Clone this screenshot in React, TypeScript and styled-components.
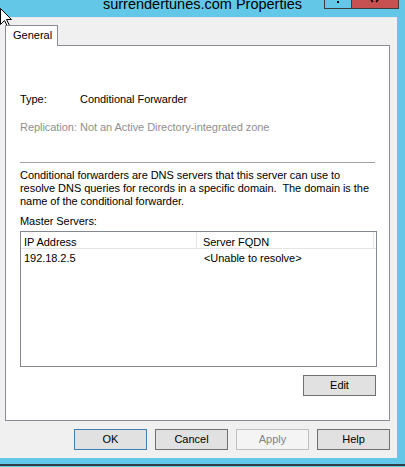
import React from "react";
import styled, { createGlobalStyle } from "styled-components";

const GlobalStyle = createGlobalStyle`
  html, body { margin: 0; padding: 0; background: #63c7e7; }
  body { font-family: "Liberation Sans", Arial, sans-serif; -webkit-font-smoothing: none; }
  * { box-sizing: border-box; }
`;

const Window = styled.div`
  position: relative;
  width: 405px;
  height: 467px;
  background: #63c7e7;
  display: flex;
  flex-direction: column;
  overflow: hidden;
`;

const TitleBar = styled.div`
  height: 17px;
  display: grid;
  overflow: hidden;
`;

const Title = styled.div`
  grid-area: 1 / 1;
  justify-self: center;
  width: 397px;
  text-align: center;
  font-size: 14.5px;
  line-height: 17px;
  margin-top: -4.5px;
  color: #000;
  white-space: nowrap;
`;

const Captions = styled.div`
  grid-area: 1 / 1;
  justify-self: end;
  align-self: start;
  display: flex;
  margin-right: 6px;
`;

const CaptionButton = styled.div<{ $close?: boolean }>`
  width: ${(p) => (p.$close ? 47 : 28)}px;
  height: 9px;
  background: ${(p) => (p.$close ? "#c75050" : "#63c7e7")};
  border: 1px solid #3d3d3d;
  border-top: none;
  ${(p) => (p.$close ? "border-left: none;" : "")}
  display: flex;
  justify-content: center;
  align-items: flex-start;
`;

const Client = styled.div`
  width: 397px;
  height: 441px;
  background: #f0f0f0;
  border-top: 1px solid #e8e8e8;
  padding: 7px 7px 0 5px;
  display: flex;
  flex-direction: column;
`;

const BottomEdge = styled.div`
  margin-top: 6px;
  height: 2px;
  background: #2f3d44;
`;

const Tab = styled.div`
  position: relative;
  z-index: 1;
  width: 53px;
  height: 21px;
  margin-bottom: -1px;
  background: #fff;
  border: 1px solid #898c95;
  border-bottom: none;
  padding: 3px 0 0 7px;
  font-size: 11px;
  line-height: 13px;
  color: #000;
`;

const Panel = styled.div`
  height: 376px;
  background: #fff;
  border: 1px solid #898c95;
  padding: 47px 13px 0 14px;
  display: flex;
  flex-direction: column;
  font-size: 11px;
  line-height: 13px;
  letter-spacing: -0.05px;
  color: #000;
`;

const InfoRow = styled.div<{ $muted?: boolean; $gap?: number }>`
  display: grid;
  grid-template-columns: 60px 1fr;
  margin-top: ${(p) => p.$gap ?? 0}px;
  color: ${(p) => (p.$muted ? "#8f8f8f" : "#000")};
`;

const Separator = styled.div`
  margin-top: 28px;
  margin-right: 1px;
  height: 1px;
  background: #a0a0a0;
`;

const Paragraph = styled.p`
  margin: 6px 0 0;
  width: 350px;
`;

const Label = styled.div`
  margin-top: 7px;
`;

const ListBox = styled.div`
  margin-top: 3px;
  margin-right: -1px;
  height: 136px;
  border: 1px solid #828790;
  background: #fff;
  display: flex;
  flex-direction: column;
`;

const Columns = styled.div<{ $header?: boolean }>`
  display: grid;
  grid-template-columns: 176px 177px;
  height: ${(p) => (p.$header ? 17 : 16)}px;
  ${(p) => (p.$header ? "border-bottom: 1px solid #e5e5e5;" : "margin-top: 3px;")}
`;

const Cell = styled.div<{ $header?: boolean; $pad: number }>`
  padding-left: ${(p) => p.$pad}px;
  padding-top: ${(p) => (p.$header ? 4 : 0)}px;
  white-space: nowrap;
  ${(p) => (p.$header ? "border-right: 1px solid #e5e5e5;" : "")}
`;

const Button = styled.div<{ $default?: boolean; $disabled?: boolean }>`
  width: 73px;
  height: 21px;
  display: flex;
  align-items: center;
  justify-content: center;
  font-size: 11px;
  line-height: 13px;
  background: ${(p) => (p.$disabled ? "#f4f4f4" : "#e1e1e1")};
  border: 1px solid
    ${(p) => (p.$default ? "#3c7fb1" : p.$disabled ? "#bfbfbf" : "#707070")};
  color: ${(p) => (p.$disabled ? "#838383" : "#000")};
`;

const EditButton = styled(Button)`
  align-self: flex-end;
  margin-top: 8px;
`;

const ButtonRow = styled.div`
  margin-top: 8px;
  display: flex;
  justify-content: flex-end;
  gap: 8px;
`;

const Cursor = styled.svg`
  position: absolute;
  left: -1px;
  top: 8px;
`;

export default function App() {
  return (
    <>
      <GlobalStyle />
      <Window>
        <TitleBar>
          <Title>surrendertunes.com Properties</Title>
          <Captions>
            <CaptionButton>
              <svg width="3" height="3" style={{ marginTop: 1 }}>
                <rect x="0" y="0" width="2" height="2" fill="#000" />
              </svg>
            </CaptionButton>
            <CaptionButton $close>
              <svg width="10" height="3">
                <path d="M1 0 L3 2 M8 0 L6 2" stroke="#000" strokeWidth="1.6" />
              </svg>
            </CaptionButton>
          </Captions>
        </TitleBar>
        <Client>
          <Tab>General</Tab>
          <Panel>
            <InfoRow>
              <span>Type:</span>
              <span>Conditional Forwarder</span>
            </InfoRow>
            <InfoRow $muted $gap={15}>
              <span>Replication:</span>
              <span>Not an Active Directory-integrated zone</span>
            </InfoRow>
            <Separator />
            <Paragraph>
              Conditional forwarders are DNS servers that this server can use to
              resolve DNS queries for records in a specific domain.&nbsp; The
              domain is the name of the conditional forwarder.
            </Paragraph>
            <Label>Master Servers:</Label>
            <ListBox>
              <Columns $header>
                <Cell $header $pad={3}>IP Address</Cell>
                <Cell $header $pad={6}>Server FQDN</Cell>
              </Columns>
              <Columns>
                <Cell $pad={3}>192.18.2.5</Cell>
                <Cell $pad={7}>&lt;Unable to resolve&gt;</Cell>
              </Columns>
            </ListBox>
            <EditButton>Edit</EditButton>
          </Panel>
          <ButtonRow>
            <Button $default>OK</Button>
            <Button>Cancel</Button>
            <Button $disabled>Apply</Button>
            <Button>Help</Button>
          </ButtonRow>
        </Client>
        <BottomEdge />
        <Cursor width="13" height="20" viewBox="0 0 13 20">
          <path
            d="M1.5 0.5 L1.5 16.5 L5.5 12.5 L8.5 18.5 L10.5 17.5 L7.5 11.5 L12.5 11.5 Z"
            fill="#fff"
            stroke="#000"
            strokeWidth="1"
          />
        </Cursor>
      </Window>
    </>
  );
}
